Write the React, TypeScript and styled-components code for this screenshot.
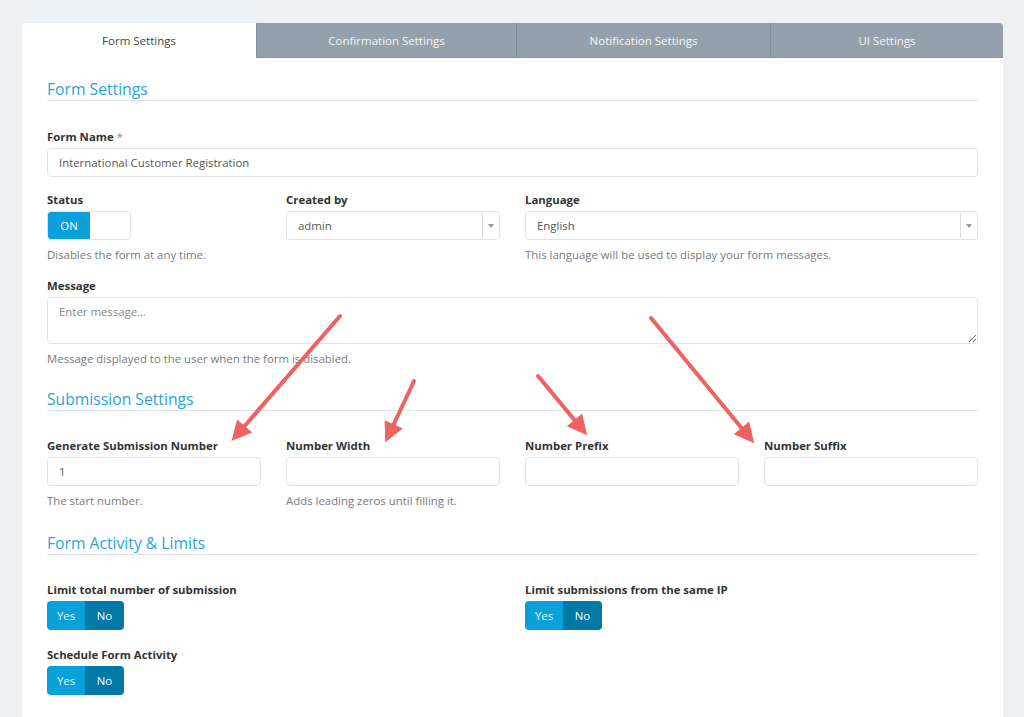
import * as React from "react";
import styled, { createGlobalStyle } from "styled-components";

const GlobalStyle = createGlobalStyle`
  html, body {
    margin: 0;
    padding: 0;
    background: #edf1f4;
    font-family: "Open Sans", "Noto Sans", sans-serif;
    color: #333;
  }
  * { box-sizing: border-box; }
`;

const Page = styled.div`
  position: relative;
  width: 1024px;
  height: 717px;
  padding: 23px 21px 0 22px;
  overflow: hidden;
`;

const Card = styled.div`
  background: #fff;
  border-radius: 4px 4px 0 0;
  height: 100%;
`;

const TabBar = styled.div`
  display: grid;
  grid-template-columns: 234px 260px 254px 1fr;
  height: 35px;
`;

const Tab = styled.div<{ $active?: boolean; $last?: boolean }>`
  display: flex;
  align-items: center;
  justify-content: center;
  font-size: 11.5px;
  background: ${(p) => (p.$active ? "#fff" : "#94a1ac")};
  color: ${(p) => (p.$active ? "#444" : "#f4f6f8")};
  border-left: ${(p) => (p.$active ? "none" : "1px solid #7e8f9b")};
  border-bottom: ${(p) => (p.$active ? "none" : "1px solid #8797a2")};
  border-radius: ${(p) => (p.$active ? "4px 0 0 0" : p.$last ? "0 4px 0 0" : "0")};
`;

const Body = styled.div`
  padding: 0 25px 20px;
`;

const SectionTitle = styled.h3<{ $top: number }>`
  margin: ${(p) => p.$top}px 0 0;
  font-size: 15.7px;
  font-weight: 400;
  line-height: 20px;
  color: #2aa3dc;
  border-bottom: 1px solid #dde4e8;
  padding-bottom: 1px;
`;

const Grid = styled.div<{ $top: number }>`
  display: grid;
  grid-template-columns: repeat(4, 1fr);
  column-gap: 25px;
  margin-top: ${(p) => p.$top}px;
`;

const Group = styled.div<{ $span?: number; $gap?: number }>`
  grid-column: span ${(p) => p.$span || 1};
  margin-bottom: ${(p) => (p.$gap === undefined ? 14 : p.$gap)}px;
`;

const Label = styled.div`
  font-size: 11.4px;
  font-weight: 700;
  line-height: 17px;
  color: #333;
  margin-bottom: 3px;
`;

const Required = styled.span`
  color: #e8606a;
  font-weight: 400;
  margin-left: 3px;
`;

const Input = styled.div`
  height: 29px;
  border: 1px solid #e1e4e6;
  border-radius: 4px;
  padding: 0 11px;
  display: flex;
  align-items: center;
  font-size: 11.4px;
  color: #555;
`;

const TextArea = styled.textarea`
  display: block;
  width: 100%;
  height: 47px;
  border: 1px solid #e1e4e6;
  border-radius: 4px;
  padding: 6px 11px;
  font-family: "Open Sans", "Noto Sans", sans-serif;
  font-size: 11.4px;
  color: #555;
  resize: vertical;
  &::placeholder {
    color: #888;
  }
`;

const Help = styled.div`
  font-size: 11.4px;
  line-height: 16px;
  color: #7a7a7a;
  margin-top: 7px;
`;

const SelectBox = styled.div`
  height: 29px;
  border: 1px solid #e1e4e6;
  border-radius: 4px;
  display: flex;
  font-size: 11.4px;
  color: #555;
`;

const SelectValue = styled.div`
  flex: 1;
  display: flex;
  align-items: center;
  padding: 0 11px;
`;

const SelectCaret = styled.div`
  width: 17px;
  border-left: 1px solid #dadde0;
  display: flex;
  align-items: center;
  justify-content: center;
  margin: 1px 0;
  &::after {
    content: "";
    border-left: 3px solid transparent;
    border-right: 3px solid transparent;
    border-top: 4px solid #999;
  }
`;

const Switch = styled.div`
  width: 84px;
  height: 29px;
  border: 1px solid #e1e4e6;
  border-radius: 4px;
  overflow: hidden;
  display: flex;
`;

const SwitchOn = styled.div`
  width: 42px;
  background: #0aa0d9;
  color: #fff;
  font-size: 11.4px;
  display: flex;
  align-items: center;
  justify-content: center;
`;

const ButtonGroup = styled.div`
  display: inline-flex;
  height: 29px;
  border-radius: 4px;
  overflow: hidden;
`;

const ChoiceButton = styled.div<{ $dark?: boolean }>`
  width: ${(p) => (p.$dark ? 39 : 38)}px;
  background: ${(p) => (p.$dark ? "#0079a6" : "#0aa0d9")};
  color: ${(p) => (p.$dark ? "#fff" : "#e6f5fb")};
  font-size: 11.4px;
  display: flex;
  align-items: center;
  justify-content: center;
`;

const Overlay = styled.svg`
  position: absolute;
  left: 0;
  top: 0;
  pointer-events: none;
`;

const arrows = [
  { x1: 340, y1: 316, x2: 242, y2: 429 },
  { x1: 414, y1: 381, x2: 392, y2: 428 },
  { x1: 538, y1: 376, x2: 577, y2: 423 },
  { x1: 651, y1: 318, x2: 744, y2: 431 },
];

const YesNo = () => (
  <ButtonGroup>
    <ChoiceButton>Yes</ChoiceButton>
    <ChoiceButton $dark>No</ChoiceButton>
  </ButtonGroup>
);

const App = () => (
  <Page>
    <GlobalStyle />
    <Card>
      <TabBar>
        <Tab $active>Form Settings</Tab>
        <Tab>Confirmation Settings</Tab>
        <Tab>Notification Settings</Tab>
        <Tab $last>UI Settings</Tab>
      </TabBar>
      <Body>
        <SectionTitle $top={21}>Form Settings</SectionTitle>
        <Grid $top={27}>
          <Group $span={4}>
            <Label>
              Form Name<Required>*</Required>
            </Label>
            <Input>International Customer Registration</Input>
          </Group>
          <Group>
            <Label>Status</Label>
            <Switch>
              <SwitchOn>ON</SwitchOn>
            </Switch>
            <Help>Disables the form at any time.</Help>
          </Group>
          <Group>
            <Label>Created by</Label>
            <SelectBox>
              <SelectValue>admin</SelectValue>
              <SelectCaret />
            </SelectBox>
          </Group>
          <Group $span={2}>
            <Label>Language</Label>
            <SelectBox>
              <SelectValue>English</SelectValue>
              <SelectCaret />
            </SelectBox>
            <Help>This language will be used to display your form messages.</Help>
          </Group>
          <Group $span={4} $gap={0}>
            <Label>Message</Label>
            <TextArea placeholder="Enter message..." />
            <Help>Message displayed to the user when the form is disabled.</Help>
          </Group>
        </Grid>

        <SectionTitle $top={22}>Submission Settings</SectionTitle>
        <Grid $top={26}>
          <Group $gap={0}>
            <Label>Generate Submission Number</Label>
            <Input>1</Input>
            <Help>The start number.</Help>
          </Group>
          <Group $gap={0}>
            <Label>Number Width</Label>
            <Input />
            <Help>Adds leading zeros until filling it.</Help>
          </Group>
          <Group $gap={0}>
            <Label>Number Prefix</Label>
            <Input />
          </Group>
          <Group $gap={0}>
            <Label>Number Suffix</Label>
            <Input />
          </Group>
        </Grid>

        <SectionTitle $top={24}>Form Activity &amp; Limits</SectionTitle>
        <Grid $top={26}>
          <Group $span={2} $gap={16}>
            <Label>Limit total number of submission</Label>
            <YesNo />
          </Group>
          <Group $span={2} $gap={16}>
            <Label>Limit submissions from the same IP</Label>
            <YesNo />
          </Group>
          <Group $span={4}>
            <Label>Schedule Form Activity</Label>
            <YesNo />
          </Group>
        </Grid>
      </Body>
    </Card>
    <Overlay width="1024" height="717" viewBox="0 0 1024 717">
      <defs>
        <marker
          id="head"
          viewBox="0 0 10 10"
          refX="2"
          refY="5"
          markerWidth="5.5"
          markerHeight="5"
          orient="auto"
          markerUnits="strokeWidth"
        >
          <path d="M0 0 L10 5 L0 10 z" fill="#ef6262" />
        </marker>
      </defs>
      {arrows.map((a, i) => (
        <line
          key={i}
          x1={a.x1}
          y1={a.y1}
          x2={a.x2}
          y2={a.y2}
          stroke="#ef6262"
          strokeWidth={4}
          strokeLinecap="round"
          markerEnd="url(#head)"
        />
      ))}
    </Overlay>
  </Page>
);

export default App;
